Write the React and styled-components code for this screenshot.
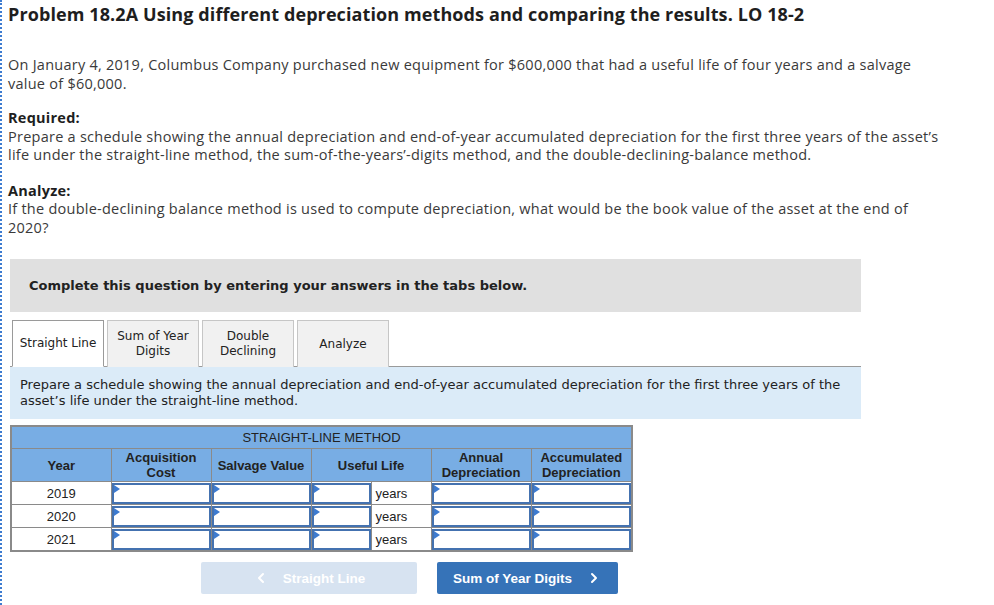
import React from "react"
import styled, { createGlobalStyle } from "styled-components"
import { ChevronLeft, ChevronRight } from "lucide-react"

const GlobalStyle = createGlobalStyle`
  html, body { margin: 0; padding: 0; background: #fff; }
`

const Page = styled.div`
  min-height: 100vh;
  box-sizing: border-box;
  border-left: 2px dotted #3d7bd0;
  padding: 3px 40px 0 6px;
  font-family: "Open Sans", "Liberation Sans", sans-serif;
  color: #3a3a3a;
`

const Title = styled.h1`
  margin: 0;
  font-size: 18px;
  letter-spacing: 0.1px;
  line-height: 22px;
  font-weight: 700;
  color: #1e1e1e;
`

const Section = styled.div`
  margin-top: ${p => p.$top}px;
  font-size: 14.5px;
  letter-spacing: 0.25px;
  line-height: 18.5px;
  max-width: 936px;
`

const Label = styled.div`
  font-weight: 700;
  color: #1e1e1e;
`

const Question = styled.div`
  margin: 22px 0 0 2px;
  width: 851px;
  font-family: "DejaVu Sans", Verdana, sans-serif;
  color: #222;
`

const Banner = styled.div`
  background: #e0e0e0;
  height: 53px;
  display: flex;
  align-items: center;
  padding-left: 19px;
  font-size: 13px;
  font-weight: 700;
`

const TabBar = styled.div`
  display: flex;
  gap: 3px;
  margin-top: 8px;
  padding-left: 2px;
  border-bottom: 1px solid #9a9a9a;
`

const Tab = styled.div`
  width: 92px;
  height: 47px;
  box-sizing: border-box;
  display: flex;
  align-items: center;
  justify-content: center;
  text-align: center;
  font-size: 12px;
  line-height: 15px;
  border: 1px solid ${p => (p.$active ? "#9a9a9a" : "#c6c6c6")};
  border-bottom: ${p => (p.$active ? "1px solid #fff" : "none")};
  margin-bottom: -1px;
  background: ${p => (p.$active ? "#fff" : "#f1f1f1")};
`

const Instruction = styled.div`
  background: #dbebf8;
  padding: 10px;
  font-size: 13px;
  line-height: 16px;
  color: #222;
`

const Table = styled.table`
  margin-top: 6px;
  border-collapse: collapse;
  table-layout: fixed;
  width: 621px;
  font-family: "Liberation Sans", Arial, sans-serif;
  font-size: 13px;
  color: #222;
  border: 2px solid #8a8a8a;
`

const Head = styled.th`
  background: #78ade4;
  border: 1px solid #8a8a8a;
  font-weight: ${p => (p.$light ? 400 : 700)};
  height: ${p => p.$h}px;
  padding: 0;
  line-height: 15px;
  text-align: center;
`

const Cell = styled.td`
  border: 1px solid #8a8a8a;
  height: 22px;
  padding: ${p => (p.$input ? "0" : "0 4px")};
  text-align: ${p => p.$align || "center"};
  background: #fff;
`

const InputBox = styled.div`
  position: relative;
  height: 21px;
  box-sizing: border-box;
  border: 2px solid #4472b0;
  &::before {
    content: "";
    position: absolute;
    left: 0;
    top: 0;
    border-top: 4px solid transparent;
    border-bottom: 4px solid transparent;
    border-left: 6px solid #3d7bd0;
  }
`

const NavRow = styled.div`
  display: flex;
  gap: 20px;
  margin-top: 10px;
  padding-left: 191px;
`

const NavButton = styled.div`
  height: 32px;
  width: ${p => p.$w}px;
  box-sizing: border-box;
  border-radius: 2px;
  display: flex;
  align-items: center;
  justify-content: center;
  gap: 14px;
  font-family: "Liberation Sans", Arial, sans-serif;
  font-size: 13.5px;
  font-weight: 700;
  color: #fff;
  background: ${p => (p.$disabled ? "#d7e3f1" : "#3673b8")};
`

const years = ["2019", "2020", "2021"]

const InputCell = () => (
  <Cell $input>
    <InputBox />
  </Cell>
)

export default function App() {
  return (
    <Page>
      <GlobalStyle />
      <Title>Problem 18.2A Using different depreciation methods and comparing the results. LO 18-2</Title>
      <Section $top={31}>
        On January 4, 2019, Columbus Company purchased new equipment for $600,000 that had a useful life of four years and a salvage value of $60,000.
      </Section>
      <Section $top={16}>
        <Label>Required:</Label>
        Prepare a schedule showing the annual depreciation and end-of-year accumulated depreciation for the first three years of the asset’s life under the straight-line method, the sum-of-the-years’-digits method, and the double-declining-balance method.
      </Section>
      <Section $top={17}>
        <Label>Analyze:</Label>
        If the double-declining balance method is used to compute depreciation, what would be the book value of the asset at the end of 2020?
      </Section>

      <Question>
        <Banner>Complete this question by entering your answers in the tabs below.</Banner>
        <TabBar>
          <Tab $active>Straight Line</Tab>
          <Tab>Sum of Year<br />Digits</Tab>
          <Tab>Double<br />Declining</Tab>
          <Tab>Analyze</Tab>
        </TabBar>
        <Instruction>
          Prepare a schedule showing the annual depreciation and end-of-year accumulated depreciation for the first three years of the asset’s life under the straight-line method.
        </Instruction>

        <Table>
          <colgroup>
            <col style={{ width: 100 }} />
            <col style={{ width: 100 }} />
            <col style={{ width: 100 }} />
            <col style={{ width: 60 }} />
            <col style={{ width: 60 }} />
            <col style={{ width: 100 }} />
            <col style={{ width: 101 }} />
          </colgroup>
          <thead>
            <tr>
              <Head colSpan={7} $h={21} $light>STRAIGHT-LINE METHOD</Head>
            </tr>
            <tr>
              <Head $h={32}>Year</Head>
              <Head $h={32}>Acquisition<br />Cost</Head>
              <Head $h={32}>Salvage Value</Head>
              <Head $h={32} colSpan={2}>Useful Life</Head>
              <Head $h={32}>Annual<br />Depreciation</Head>
              <Head $h={32}>Accumulated<br />Depreciation</Head>
            </tr>
          </thead>
          <tbody>
            {years.map(y => (
              <tr key={y}>
                <Cell>{y}</Cell>
                <InputCell />
                <InputCell />
                <InputCell />
                <Cell $align="left">years</Cell>
                <InputCell />
                <InputCell />
              </tr>
            ))}
          </tbody>
        </Table>

        <NavRow>
          <NavButton $w={216} $disabled>
            <ChevronLeft size={16} strokeWidth={3} />
            <span>Straight Line</span>
          </NavButton>
          <NavButton $w={181}>
            <span>Sum of Year Digits</span>
            <ChevronRight size={16} strokeWidth={3} />
          </NavButton>
        </NavRow>
      </Question>
    </Page>
  )
}
